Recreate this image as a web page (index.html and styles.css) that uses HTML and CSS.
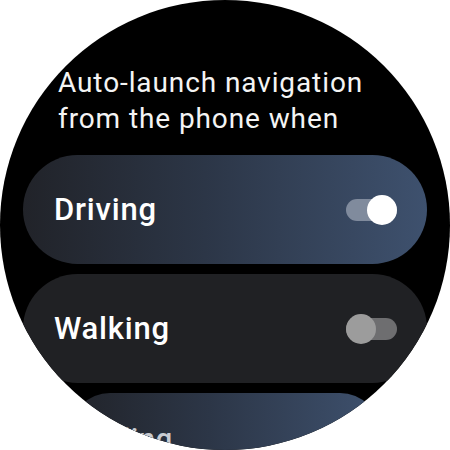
FILE: index.html
```html
<!DOCTYPE html>
<html>
<head>
<meta charset="utf-8">
<link rel="stylesheet" href="styles.css">
</head>
<body>
<div class="watch">
  <div class="list">
    <p class="heading">Auto-launch navigation from the phone when</p>
    <div class="chip chip-on">
      <span class="label">Driving</span>
      <span class="toggle on"><span class="track"></span><span class="thumb"></span></span>
    </div>
    <div class="chip chip-off">
      <span class="label">Walking</span>
      <span class="toggle off"><span class="track"></span><span class="thumb"></span></span>
    </div>
    <div class="chip chip-on chip-far">
      <span class="label">Cycling</span>
    </div>
  </div>
</div>
</body>
</html>
```

FILE: styles.css
```css
html, body {
  margin: 0;
  padding: 0;
  background: #ffffff;
}
.watch {
  width: 450px;
  height: 450px;
  border-radius: 50%;
  background: #000000;
  overflow: hidden;
  font-family: Roboto, "Noto Sans", sans-serif;
  color: #ffffff;
}
.list {
  display: flex;
  flex-direction: column;
  align-items: center;
  padding-top: 65px;
  gap: 10px;
}
.heading {
  margin: 0 0 8px 0;
  width: 334px;
  font-size: 28px;
  line-height: 36px;
  font-weight: 400;
  letter-spacing: 0.9px;
  color: #f4f4f4;
}
.chip {
  box-sizing: border-box;
  width: 404px;
  height: 109px;
  border-radius: 55px;
  display: flex;
  align-items: center;
  justify-content: space-between;
  padding: 0 30px 0 31px;
  flex-shrink: 0;
}
.chip-on {
  background: linear-gradient(90deg, #212329 0%, #2c3647 45%, #3e516e 100%);
}
.chip-off {
  background: #202124;
}
.label {
  font-size: 31px;
  font-weight: 500;
  letter-spacing: 0.8px;
}
.toggle {
  position: relative;
  width: 51px;
  height: 30px;
  display: block;
}
.track {
  position: absolute;
  left: 0;
  right: 0;
  top: 4px;
  height: 22px;
  border-radius: 11px;
}
.thumb {
  position: absolute;
  top: 0;
  width: 30px;
  height: 30px;
  border-radius: 50%;
}
.on .track { background: #808b9d; }
.on .thumb { right: 0; background: #ffffff; }
.off .track { background: #6e6e70; }
.off .thumb { left: 0; background: #9c9c9c; }
.chip-far {
  width: 310px;
  height: 90px;
  border-radius: 40px;
  align-items: flex-start;
  padding-left: 2px;
}
.chip-far .label {
  color: #c9ccd2;
  font-size: 29px;
  padding-top: 29px;
}
```
